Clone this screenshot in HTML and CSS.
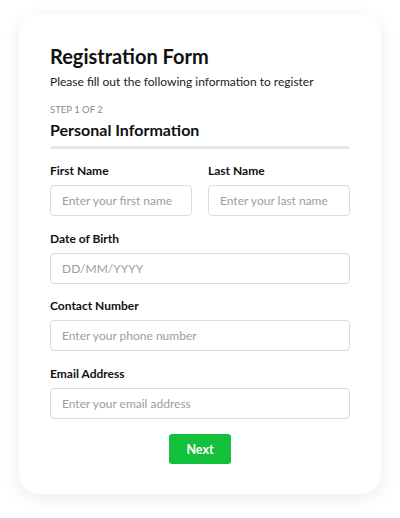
FILE: index.html
```html
<!DOCTYPE html>
<html lang="en">
<head>
<meta charset="utf-8">
<title>Registration Form</title>
<link rel="stylesheet" href="styles.css">
</head>
<body>
<main class="card">
  <h1 class="title">Registration Form</h1>
  <p class="subtitle">Please fill out the following information to register</p>
  <div class="step">STEP 1 OF 2</div>
  <h2 class="section">Personal Information</h2>
  <div class="divider"></div>
  <form class="form">
    <div class="row">
      <div class="field">
        <label class="label">First Name</label>
        <input class="input" type="text" placeholder="Enter your first name">
      </div>
      <div class="field">
        <label class="label">Last Name</label>
        <input class="input" type="text" placeholder="Enter your last name">
      </div>
    </div>
    <div class="field">
      <label class="label">Date of Birth</label>
      <input class="input" type="text" placeholder="DD/MM/YYYY">
    </div>
    <div class="field">
      <label class="label">Contact Number</label>
      <input class="input" type="text" placeholder="Enter your phone number">
    </div>
    <div class="field">
      <label class="label">Email Address</label>
      <input class="input" type="text" placeholder="Enter your email address">
    </div>
    <div class="actions">
      <button class="btn" type="button">Next</button>
    </div>
  </form>
</main>
</body>
</html>
```
FILE: styles.css
```css
* { box-sizing: border-box; }
html, body { margin: 0; padding: 0; background: #ffffff; }
body {
  font-family: "Lato", "Open Sans", sans-serif;
  color: #111111;
  padding: 14px 19px 24px;
}
.card {
  width: 362px;
  background: #ffffff;
  border-radius: 20px;
  box-shadow: 0 4px 18px rgba(0, 0, 0, 0.08);
  padding: 30px 31px 30px;
}
.title {
  margin: 0;
  font-size: 20px;
  line-height: 24px;
  font-weight: 700;
  color: #111;
}
.subtitle {
  margin: 6px 0 0;
  font-size: 12px;
  line-height: 16px;
  color: #222;
}
.step {
  margin-top: 13px;
  font-size: 9.5px;
  line-height: 14px;
  color: #8a8a8a;
}
.section {
  margin: 3px 0 0;
  font-size: 16px;
  line-height: 20px;
  font-weight: 700;
  color: #111;
}
.divider {
  margin-top: 6px;
  height: 3px;
  background: #e6e6e6;
  border-radius: 2px;
}
.form {
  margin-top: 14px;
  display: flex;
  flex-direction: column;
}
.row {
  display: grid;
  grid-template-columns: 1fr 1fr;
  column-gap: 16px;
}
.field {
  display: flex;
  flex-direction: column;
  margin-bottom: 14.5px;
}
.label {
  font-size: 12px;
  line-height: 16px;
  height: 16px;
  font-weight: 700;
  color: #111;
  margin-bottom: 6px;
}
.input {
  height: 31px;
  width: 100%;
  border: 1px solid #dcdcdc;
  border-radius: 4px;
  padding: 0 11px;
  font-family: inherit;
  font-size: 12px;
  color: #333;
  background: #fff;
  outline: none;
}
.input::placeholder { color: #9d9d9d; }
.actions {
  display: flex;
  justify-content: center;
  margin-top: 1px;
}
.btn {
  width: 62px;
  height: 30px;
  border: none;
  border-radius: 3px;
  background: #13c13b;
  color: #ffffff;
  font-family: inherit;
  font-size: 12.5px;
  font-weight: 700;
  cursor: pointer;
}
```
